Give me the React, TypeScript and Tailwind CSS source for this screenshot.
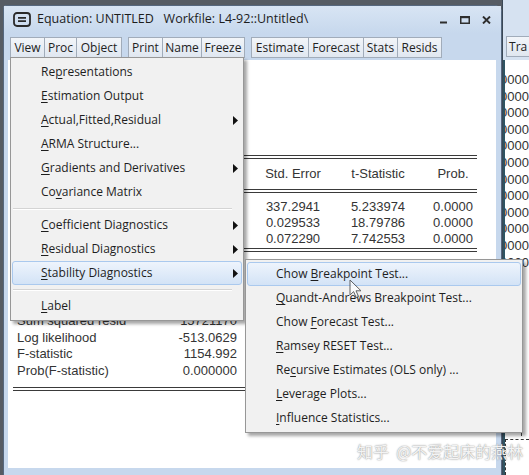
import React from 'react';

type Entry =
  | { pre: string; acc: string; post: string; arrow?: boolean; active?: boolean }
  | 'sep';

const viewMenu: Entry[] = [
  { pre: 'Re', acc: 'p', post: 'resentations' },
  { pre: '', acc: 'E', post: 'stimation Output' },
  { pre: '', acc: 'A', post: 'ctual,Fitted,Residual', arrow: true },
  { pre: '', acc: 'A', post: 'RMA Structure...' },
  { pre: '', acc: 'G', post: 'radients and Derivatives', arrow: true },
  { pre: 'Co', acc: 'v', post: 'ariance Matrix' },
  'sep',
  { pre: '', acc: 'C', post: 'oefficient Diagnostics', arrow: true },
  { pre: '', acc: 'R', post: 'esidual Diagnostics', arrow: true },
  { pre: '', acc: 'S', post: 'tability Diagnostics', arrow: true, active: true },
  'sep',
  { pre: '', acc: 'L', post: 'abel' },
];

const stabilityMenu: Entry[] = [
  { pre: 'Chow ', acc: 'B', post: 'reakpoint Test...', active: true },
  { pre: '', acc: 'Q', post: 'uandt-Andrews Breakpoint Test...' },
  { pre: 'Chow ', acc: 'F', post: 'orecast Test...' },
  { pre: '', acc: 'R', post: 'amsey RESET Test...' },
  { pre: 'Re', acc: 'c', post: 'ursive Estimates (OLS only) ...' },
  { pre: '', acc: 'L', post: 'everage Plots...' },
  { pre: '', acc: 'I', post: 'nfluence Statistics...' },
];

const toolbar = [
  [
    { label: 'View', w: 'w-[35px]' },
    { label: 'Proc', w: 'w-[33px]' },
    { label: 'Object', w: 'w-[46px]' },
  ],
  [
    { label: 'Print', w: 'w-[35px]' },
    { label: 'Name', w: 'w-[40px]' },
    { label: 'Freeze', w: 'w-[44px]' },
  ],
  [
    { label: 'Estimate', w: 'w-[58px]' },
    { label: 'Forecast', w: 'w-[56px]' },
    { label: 'Stats', w: 'w-[35px]' },
    { label: 'Resids', w: 'w-[45px]' },
  ],
];

const coefRows = [
  ['C', '1765.114', '337.2941', '5.233974', '0.0000'],
  ['X1', '0.555094', '0.029533', '18.79786', '0.0000'],
  ['X2', '0.559721', '0.072290', '7.742553', '0.0000'],
];

const statRows = [
  ['R-squared', '0.985272', 'Mean dependent var', '12543.73'],
  ['Adjusted R-squared', '0.984360', 'S.D. dependent var', '5604.421'],
  ['S.E. of regression', '700.8962', 'Akaike info criterion', '16.05081'],
  ['Sum squared resid', '15721170', 'Schwarz criterion', '16.19098'],
  ['Log likelihood', '-513.0629', 'Hannan-Quinn criter.', '16.09728'],
  ['F-statistic', '1154.992', 'Durbin-Watson stat', '1.384254'],
  ['Prob(F-statistic)', '0.000000', '', ''],
];

function DoubleLine() {
  return <div className="h-[4px] border-y border-[#3a3a3a]" />;
}

function Menu({ items, className }: { items: Entry[]; className: string }) {
  return (
    <div
      className={`absolute z-10 border border-[#979797] bg-[#f1f1f1] py-[2px] font-['Open_Sans',sans-serif] text-[12px] text-[#1e1e1e] shadow-[3px_3px_3px_rgba(0,0,0,0.35)] ${className}`}
    >
      {items.map((item, i) =>
        item === 'sep' ? (
          <div key={i} className="flex h-[9px] items-center pl-[2px] pr-[11px]">
            <div className="w-full border-y border-t-[#d4d4d4] border-b-white" />
          </div>
        ) : (
          <div
            key={i}
            className={`mx-[1px] flex h-[24px] items-center rounded-[3px] border pl-[28px] ${
              item.active
                ? 'border-[#aac9ee] bg-linear-to-b from-[#eef4fc] to-[#d3e3f6]'
                : 'border-transparent'
            }`}
          >
            <span className="whitespace-pre">
              {item.pre}
              <span className="underline underline-offset-2">{item.acc}</span>
              {item.post}
            </span>
            {item.arrow && (
              <svg className="ml-auto mr-[3px]" width="5" height="9" viewBox="0 0 5 9">
                <path d="M0 0 L5 4.5 L0 9 Z" fill="#111" />
              </svg>
            )}
          </div>
        )
      )}
    </div>
  );
}

export default function App() {
  return (
    <div className="relative flex h-[475px] w-[529px] overflow-hidden bg-[#565c64]">
      {/* equation window */}
      <div className="ml-[3px] mt-[5px] flex h-[480px] w-[505px] flex-col rounded-tl-[3px] rounded-tr-[7px] border border-[#56687f] bg-[#c7d8ed]">
        <div className="flex h-[27px] items-center bg-linear-to-b from-[#d8e5f4] to-[#c7d8ed] pl-[9px] font-['Open_Sans',sans-serif] text-[12.5px] text-[#1d1d1d]">
          <svg width="18" height="15" viewBox="0 0 18 15">
            <rect x="1" y="1" width="16" height="13" rx="3" fill="none" stroke="#2a2a2a" strokeWidth="1.8" />
            <path d="M5 5.8 H13 M5 9.2 H13" stroke="#2a2a2a" strokeWidth="1.8" />
          </svg>
          <span className="ml-[6px] whitespace-pre">Equation: UNTITLED   Workfile: L4-92::Untitled\</span>
          <div className="ml-auto mr-[10px] flex items-center gap-[12px]">
            <svg width="8" height="8" viewBox="0 0 8 8">
              <rect x="0" y="5.5" width="7" height="2" fill="#2e2e2e" />
            </svg>
            <svg width="10" height="8" viewBox="0 0 10 8">
              <rect x="0.75" y="1" width="8.5" height="6.25" fill="none" stroke="#2e2e2e" strokeWidth="1.5" />
              <rect x="0" y="0" width="10" height="2.2" fill="#2e2e2e" />
            </svg>
            <svg width="9" height="8" viewBox="0 0 9 8">
              <path d="M1 0.5 L8 7.5 M8 0.5 L1 7.5" stroke="#2e2e2e" strokeWidth="1.9" />
            </svg>
          </div>
        </div>

        <div className="flex h-[27px] items-start gap-[6px] pl-[6px] pt-[4px] font-['Open_Sans',sans-serif] text-[12px] text-[#222]">
          {toolbar.map((group, gi) => (
            <div key={gi} className="flex">
              {group.map((b) => (
                <div
                  key={b.label}
                  className={`-ml-px flex h-[21px] items-center justify-center border border-[#a1acba] bg-linear-to-b from-[#f2f5f9] to-[#e0e7f0] first:ml-0 ${b.w}`}
                >
                  {b.label}
                </div>
              ))}
            </div>
          ))}
        </div>

        <div className="ml-[4px] mr-[5px] h-[408px] overflow-hidden bg-white font-['Liberation_Sans',Arial,sans-serif] text-[13px] text-[#343434]">
          <div className="ml-[5px] w-[464px]">
            <div className="h-[95px] pt-[8px] leading-[16px]">
              <div>Dependent Variable: Y</div>
              <div>Method: Least Squares</div>
              <div>Sample: 1 30</div>
              <div>Included observations: 30</div>
            </div>
            <DoubleLine />
            <div className="grid h-[30px] grid-cols-[120px_114px_92px_78px_72px] items-center text-center">
              <span className="pl-[4px] text-left">Variable</span>
              <span>Coefficient</span>
              <span>Std. Error</span>
              <span>t-Statistic</span>
              <span>Prob.</span>
            </div>
            <DoubleLine />
            <div className="pt-[6px]">
              {coefRows.map((r) => (
                <div key={r[0]} className="grid h-[16px] grid-cols-[120px_114px_92px_78px_72px] items-center text-center leading-[16px]">
                  <span className="pl-[4px] text-left">{r[0]}</span>
                  <span>{r[1]}</span>
                  <span>{r[2]}</span>
                  <span>{r[3]}</span>
                  <span>{r[4]}</span>
                </div>
              ))}
            </div>
            <div className="mt-[1px]">
              <DoubleLine />
            </div>
            <div className="pt-[11px]">
              {statRows.map((r) => (
                <div key={r[0]} className="grid h-[16.6px] grid-cols-[224px_240px] items-center leading-[16px]">
                  <div className="flex justify-between pl-[4px]">
                    <span>{r[0]}</span>
                    <span>{r[1]}</span>
                  </div>
                  <div className="flex justify-between pl-[22px]">
                    <span>{r[2]}</span>
                    <span>{r[3]}</span>
                  </div>
                </div>
              ))}
            </div>
            <div className="mt-[8px]">
              <DoubleLine />
            </div>
            <div className="mt-[26px] h-[16px] pl-[234px] text-[14px] font-bold leading-[16px] text-[#222]">
              Prob(F-statistic)
            </div>
          </div>
        </div>
      </div>

      {/* window behind, at the right edge */}
      <div className="flex h-full flex-1 flex-col border-l border-[#3b4856] bg-[#d6e2f1]">
        <div className="h-[36px]" />
        <div className="ml-[3px] flex h-[21px] items-center border border-r-0 border-[#a1acba] bg-linear-to-b from-[#f2f5f9] to-[#e0e7f0] pl-[2px] font-['Open_Sans',sans-serif] text-[12px] text-[#222]">
          Tra
        </div>
        <div className="mt-[3px] flex flex-1 flex-col overflow-hidden border-l-2 border-[#2f5462] bg-white pt-[12px] font-['Liberation_Sans',Arial,sans-serif] text-[13px] text-[#333]">
          {Array.from({ length: 12 }).map((_, i) => (
            <div key={i} className="-ml-[5px] h-[16.6px] leading-[16px]">
              0000
            </div>
          ))}
          <div className="h-[165px] w-[17px] border-r border-dashed border-[#444]" />
          <div className="mt-auto h-[36px] border-l border-t border-dashed border-[#333]" />
        </div>
      </div>

      <Menu items={viewMenu} className="left-[10px] top-[57px] w-[234px]" />
      <Menu items={stabilityMenu} className="left-[245px] top-[259px] w-[278px]" />

      {/* mouse pointer */}
      <svg
        className="absolute left-[349px] top-[279px] z-20 opacity-75"
        width="13"
        height="20"
        viewBox="0 0 13 20"
      >
        <path
          d="M1 1 L1 16 L4.6 12.6 L7.2 18.6 L9.6 17.6 L7 11.8 L12 11.8 Z"
          fill="#fff"
          stroke="#333"
          strokeWidth="1"
          strokeLinejoin="round"
        />
      </svg>

      <div className="absolute left-[357px] top-[440px] z-20 whitespace-pre font-['Noto_Sans_CJK_SC',sans-serif] text-[16px] leading-[22px] text-[#f3f3f3] [text-shadow:0_0_1.5px_#6f6f6f]">
        知乎  @不爱起床的燕林
      </div>
    </div>
  );
}
